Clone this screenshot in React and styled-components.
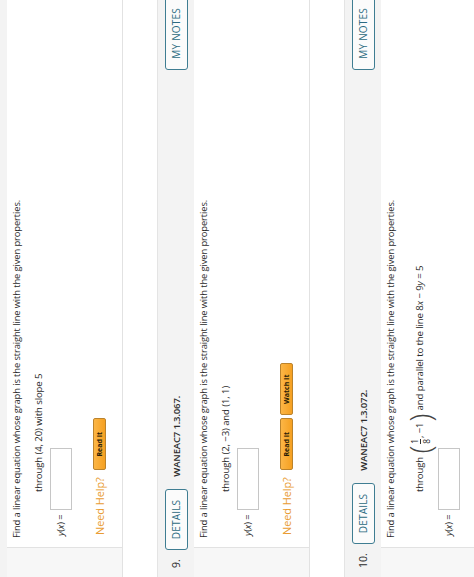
import React from 'react';
import styled, { createGlobalStyle } from 'styled-components';

const GlobalStyle = createGlobalStyle`
  html, body {
    margin: 0;
    padding: 0;
    background: #fff;
  }
  body {
    font-family: "Open Sans", "Liberation Sans", sans-serif;
    color: #2b2b2b;
  }
`;

const Viewport = styled.div`
  position: relative;
  width: 474px;
  height: 577px;
  overflow: hidden;
`;

// the capture is turned a quarter turn, so the page is laid out upright and then rotated
const Stage = styled.div`
  width: 577px;
  height: 474px;
  overflow: hidden;
  background: #fff;
  transform-origin: 0 0;
  transform: translateY(577px) rotate(-90deg);
`;

const List = styled.div`
  display: flex;
  flex-direction: column;
  gap: 34px;
  margin-top: -30px;
`;

const QuestionBox = styled.section`
  width: 586px;
  border-top: 1px solid #e4e4e4;
`;

const Header = styled.div`
  display: flex;
  align-items: center;
  height: 36px;
  padding: 0 6px 0 9px;
  background: #f3f3f3;
`;

const Num = styled.span`
  font-size: 10.5px;
  color: #2b2b2b;
  margin-right: 9px;
`;

const OutlineButton = styled.button`
  height: 23px;
  padding: 0 10px;
  border: 1px solid #3f7d92;
  border-radius: 3px;
  background: #fbfbfb;
  color: #2c6b82;
  font-family: "Open Sans", "Liberation Sans", sans-serif;
  font-size: 10px;
  letter-spacing: 0.2px;
  margin-left: ${(p) => (p.$right ? 'auto' : '0')};
`;

const Code = styled.span`
  margin-left: 12px;
  font-size: 9.6px;
  font-weight: 600;
  letter-spacing: -0.2px;
  color: #2b2b2b;
`;

const Body = styled.div`
  display: flex;
  border-bottom: 1px solid #e2e2e2;
`;

const Gutter = styled.div`
  width: 29px;
  flex: none;
  background: #f7f7f7;
`;

const Panel = styled.div`
  flex: 1;
  border-left: 1px solid #e2e2e2;
  padding: 4px 10px 15px 9px;
  font-size: 9.4px;
  letter-spacing: -0.12px;
  line-height: 12px;
  background: #fff;
`;

const Prompt = styled.div`
  white-space: nowrap;
`;

const Given = styled.div`
  display: flex;
  align-items: center;
  height: ${(p) => (p.$tall ? '28px' : '12px')};
  margin: ${(p) => (p.$tall ? '9px' : '10px')} 0 0 46px;
  font-size: 9.6px;
  white-space: pre;
`;

const Var = styled.i`
  font-style: italic;
`;

const Paren = styled.span`
  display: block;
  height: 30px;
  font-size: 29px;
  line-height: 30px;
  font-weight: 300;
  color: #444;
  margin: 0 1px;
`;

const Frac = styled.span`
  display: inline-flex;
  flex-direction: column;
  align-items: center;
  font-size: 8.4px;
  line-height: 11px;
  margin: 0 1px;
`;

const FracBar = styled.span`
  align-self: stretch;
  height: 1px;
  background: #333;
`;

const AnswerRow = styled.div`
  display: flex;
  align-items: center;
  gap: 3px;
  margin: ${(p) => (p.$tight ? '4px' : '5px')} 0 0 2px;
`;

const Label = styled.span`
  font-size: 9.4px;
  width: 23px;
  white-space: nowrap;
`;

const Input = styled.div`
  width: 62px;
  height: 22px;
  box-sizing: border-box;
  border: 1px solid #c6c6c6;
  background: #fff;
`;

const HelpRow = styled.div`
  display: flex;
  align-items: center;
  margin: 20px 0 0 3px;
  height: 15px;
`;

const NeedHelp = styled.span`
  font-size: 11px;
  letter-spacing: -0.1px;
  color: #e99c31;
  margin-right: 7px;
  white-space: nowrap;
`;

const HelpButton = styled.button`
  width: 52px;
  height: 13px;
  padding: 0;
  margin-right: 3px;
  border: 1px solid #bb832c;
  border-radius: 2px;
  background: linear-gradient(#fcb646, #f5a021);
  color: #2a1d08;
  font-family: "Open Sans", "Liberation Sans", sans-serif;
  font-size: 7px;
  font-weight: 700;
  line-height: 11px;
`;

const Question = ({ num, code, given, tall, help }) => (
  <QuestionBox>
    <Header>
      {num && (
        <>
          <Num>{num}</Num>
          <OutlineButton>DETAILS</OutlineButton>
          <Code>{code}</Code>
          <OutlineButton $right>MY NOTES</OutlineButton>
        </>
      )}
    </Header>
    <Body>
      <Gutter />
      <Panel>
        <Prompt>Find a linear equation whose graph is the straight line with the given properties.</Prompt>
        <Given $tall={tall}>{given}</Given>
        <AnswerRow $tight={tall}>
          <Label>
            <Var>y</Var>(<Var>x</Var>) =
          </Label>
          <Input />
        </AnswerRow>
        {help && (
          <HelpRow>
            <NeedHelp>Need Help?</NeedHelp>
            {help.map((h) => (
              <HelpButton key={h}>{h}</HelpButton>
            ))}
          </HelpRow>
        )}
      </Panel>
    </Body>
  </QuestionBox>
);

export default function App() {
  return (
    <Viewport>
      <GlobalStyle />
      <Stage>
        <List>
          <Question given="through (4, 20) with slope 5" help={['Read It']} />
          <Question
            num="9."
            code="WANEAC7 1.3.067."
            given="through (2, −3) and (1, 1)"
            help={['Read It', 'Watch It']}
          />
          <Question
            num="10."
            code="WANEAC7 1.3.072."
            tall
            given={
              <>
                {'through '}
                <Paren>(</Paren>
                <Frac>
                  <span>1</span>
                  <FracBar />
                  <span>8</span>
                </Frac>
                {', −1'}
                <Paren>)</Paren>
                {' and parallel to the line 8'}
                <Var>x</Var>
                {' − 9'}
                <Var>y</Var>
                {' = 5'}
              </>
            }
          />
        </List>
      </Stage>
    </Viewport>
  );
}
